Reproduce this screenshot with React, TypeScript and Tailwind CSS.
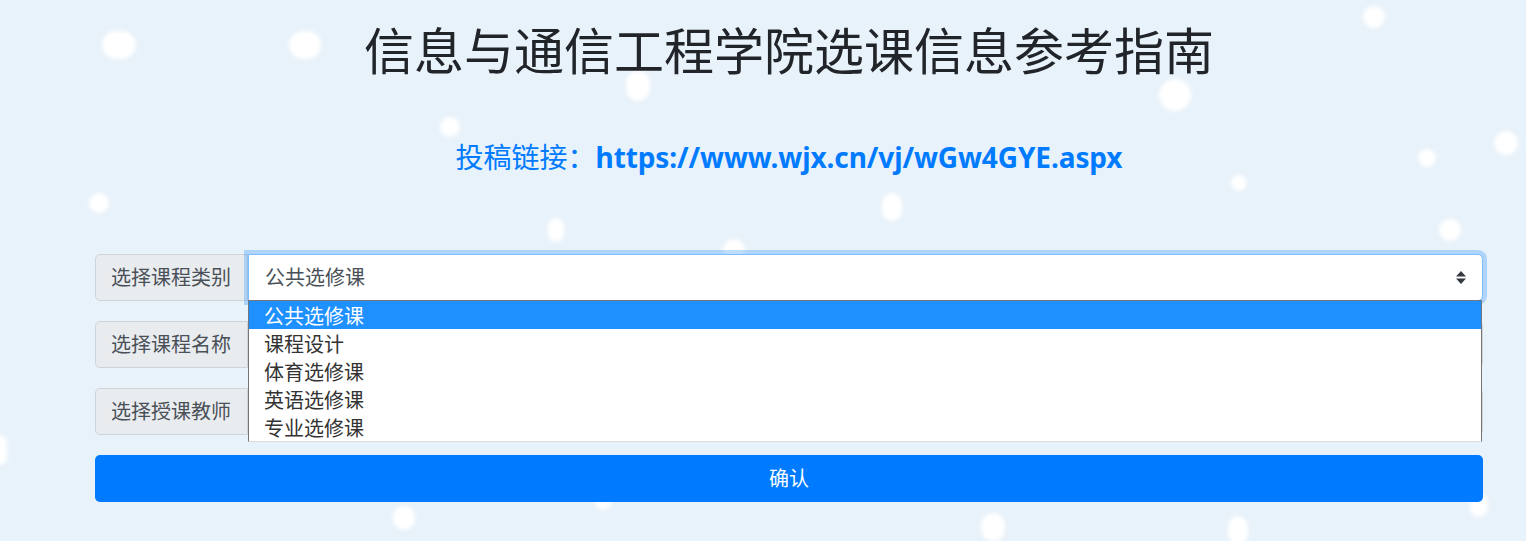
import React from 'react';

const flakes = [
  { x: 119, y: 45, w: 34, h: 28 },
  { x: 305, y: 45, w: 32, h: 28 },
  { x: 450, y: 127, w: 20, h: 20 },
  { x: 99, y: 203, w: 20, h: 20 },
  { x: 638, y: 86, w: 24, h: 30 },
  { x: 1374, y: 17, w: 22, h: 22 },
  { x: 1175, y: 95, w: 32, h: 32 },
  { x: 1506, y: 143, w: 24, h: 24 },
  { x: 1427, y: 158, w: 18, h: 18 },
  { x: 1239, y: 183, w: 16, h: 16 },
  { x: 1450, y: 230, w: 22, h: 22 },
  { x: 892, y: 207, w: 20, h: 28 },
  { x: 556, y: 230, w: 16, h: 24 },
  { x: 734, y: 250, w: 22, h: 22 },
  { x: 0, y: 450, w: 14, h: 30 },
  { x: 404, y: 518, w: 22, h: 24 },
  { x: 993, y: 527, w: 24, h: 28 },
  { x: 1238, y: 530, w: 20, h: 28 },
  { x: 1479, y: 505, w: 18, h: 24 },
  { x: 603, y: 503, w: 16, h: 14 },
];

const options = ['公共选修课', '课程设计', '体育选修课', '英语选修课', '专业选修课'];

const Label = ({ text }: { text: string }) => (
  <div className="flex h-[47px] w-[153px] shrink-0 items-center whitespace-nowrap rounded-l-[5px] border border-[#ced4da] bg-[#e9ecef] pl-[15px] text-[20px] text-[#495057]">
    {text}
  </div>
);

export default function App() {
  return (
    <div
      className="relative h-[541px] w-full overflow-hidden bg-[#e8f2fa]"
      style={{ fontFamily: '"Noto Sans", "Noto Sans CJK SC", sans-serif' }}
    >
      {/* snow */}
      {flakes.map((f, i) => (
        <div
          key={i}
          className="absolute rounded-full bg-white blur-[2px]"
          style={{ left: f.x - f.w / 2, top: f.y - f.h / 2, width: f.w, height: f.h }}
        />
      ))}

      <div className="relative ml-[95px] w-[1388px] pt-[19px]">
        <h1 className="text-center text-[50px] leading-[64px] text-[#212529]">信息与通信工程学院选课信息参考指南</h1>

        <div className="mt-[54px] text-center text-[28px] leading-[40px] text-[#007bff]">
          投稿链接：<span className="font-bold tracking-[-0.1px]">https://www.wjx.cn/vj/wGw4GYE.aspx</span>
        </div>

        <div className="mt-[77px] flex flex-col gap-[20px]">
          {/* category row with open list */}
          <div className="relative flex">
            <Label text="选择课程类别" />
            <div className="flex h-[47px] flex-1 items-center justify-between rounded-r-[5px] border border-[#80bdff] bg-white px-4 text-[20px] text-[#495057] shadow-[0_0_0_4px_rgba(0,123,255,0.25)]">
              <span>公共选修课</span>
              <svg width="10" height="13" viewBox="0 0 10 13">
                <path d="M5 0L0 5.5h10zM5 13L0 7.5h10z" fill="#343a40" />
              </svg>
            </div>
            <ul className="absolute left-[153px] right-[1px] top-[46px] z-10 border border-[#767676] border-b-[#dcdcdc] bg-white">
              {options.map((o, i) => (
                <li
                  key={o}
                  className={`h-[28px] pl-[15px] pt-[3px] text-[20px] leading-[25px] ${
                    i === 0 ? 'bg-[#1e90ff] text-white' : 'text-[#333]'
                  }`}
                >
                  {o}
                </li>
              ))}
            </ul>
          </div>

          <div className="flex">
            <Label text="选择课程名称" />
            <div className="h-[47px] flex-1 rounded-r-[5px] border border-[#ced4da] bg-white" />
          </div>

          <div className="flex">
            <Label text="选择授课教师" />
            <div className="h-[47px] flex-1 rounded-r-[5px] border border-[#ced4da] bg-white" />
          </div>

          <button className="h-[47px] w-full rounded-[5px] bg-[#007bff] text-[20px] text-white">确认</button>
        </div>
      </div>
    </div>
  );
}
